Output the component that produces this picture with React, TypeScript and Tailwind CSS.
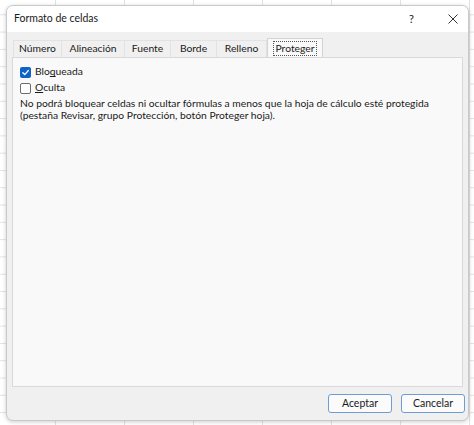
import React from 'react';

const tabs = ['Número', 'Alineación', 'Fuente', 'Borde', 'Relleno', 'Proteger'];
const tabWidths = ['w-[49px]', 'w-[63px]', 'w-[46px]', 'w-[46px]', 'w-[50px]', 'w-[56px]'];

const font = { fontFamily: 'Lato, "Noto Sans", sans-serif' };

const Check: React.FC<{ checked?: boolean }> = ({ checked }) =>
  checked ? (
    <span className="flex h-[11px] w-[11px] items-center justify-center rounded-[2px] bg-[#0f62c9]">
      <svg width="9" height="9" viewBox="0 0 10 10">
        <path d="M2 5.2 L4.2 7.3 L8.2 2.8" fill="none" stroke="#fff" strokeWidth="1.4" strokeLinecap="round" strokeLinejoin="round" />
      </svg>
    </span>
  ) : (
    <span className="h-[11px] w-[11px] rounded-[2px] border border-[#6e6e6e] bg-white" />
  );

const App: React.FC = () => {
  return (
    <div
      className="h-[425px] w-[474px] overflow-hidden bg-white bg-[linear-gradient(to_right,#e2e2e2_1px,transparent_1px),linear-gradient(to_bottom,#e2e2e2_1px,transparent_1px)] bg-[size:69px_17.3px] bg-[position:-14px_-3px] pt-[5px] pl-[6px]"
      style={font}
    >
      <div className="flex h-[416px] w-[463px] flex-col overflow-hidden rounded-[7px] border border-[#c9c9c9] bg-[#f0f0f0] text-[10.3px] text-[#1a1a1a] shadow-[0_1px_4px_rgba(0,0,0,0.2)]">
        {/* title bar */}
        <div className="flex h-[26px] shrink-0 items-center bg-white pl-[7px] pr-[10px]">
          <span className="text-[10.5px]">Formato de celdas</span>
          <span className="ml-auto mr-[34px] text-[11px]">?</span>
          <svg width="10" height="10" viewBox="0 0 10 10">
            <path d="M0.5 0.5 L9.5 9.5 M9.5 0.5 L0.5 9.5" stroke="#333" strokeWidth="1" />
          </svg>
        </div>

        {/* tabs */}
        <div className="flex h-[25px] shrink-0 items-end pl-[6px]">
          {tabs.map((t, i) =>
            i === tabs.length - 1 ? (
              <div
                key={t}
                className={`${tabWidths[i]} -mb-px flex h-[20px] items-center justify-center border border-b-0 border-[#d4d4d4] bg-[#f9f9f9]`}
              >
                <span className="border border-dotted border-[#555] px-[2px] leading-[13px]">{t}</span>
              </div>
            ) : (
              <div
                key={t}
                className={`${tabWidths[i]} flex h-[17px] items-center justify-center border-r border-t border-[#e2e2e2] ${i === 0 ? 'border-l' : ''}`}
              >
                {t}
              </div>
            )
          )}
        </div>

        {/* panel */}
        <div className="mx-[5px] flex h-[330px] shrink-0 flex-col border border-[#d9d9d9] bg-[#f9f9f9] pl-[7px] pt-[7px]">
          <label className="flex h-[14px] items-center gap-[4px]">
            <Check checked />
            <span>
              Blo<span className="underline">q</span>ueada
            </span>
          </label>
          <label className="mt-[2px] flex h-[14px] items-center gap-[4px]">
            <Check />
            <span>
              <span className="underline">O</span>culta
            </span>
          </label>
          <p className="mt-[2px] whitespace-nowrap leading-[12px]">
            No podrá bloquear celdas ni ocultar fórmulas a menos que la hoja de cálculo esté protegida
            <br />
            (pestaña Revisar, grupo Protección, botón Proteger hoja).
          </p>
        </div>

        {/* buttons */}
        <div className="flex flex-1 items-center justify-end gap-[9px] pr-[3px]">
          <button className="h-[19px] w-[64px] rounded-[3px] border border-[#6f9dd3] bg-[#fbfbfb] text-[10.5px]">
            Aceptar
          </button>
          <button className="h-[19px] w-[64px] rounded-[3px] border border-[#6f9dd3] bg-[#fbfbfb] text-[10.5px]">
            Cancelar
          </button>
        </div>
      </div>
    </div>
  );
};

export default App;
